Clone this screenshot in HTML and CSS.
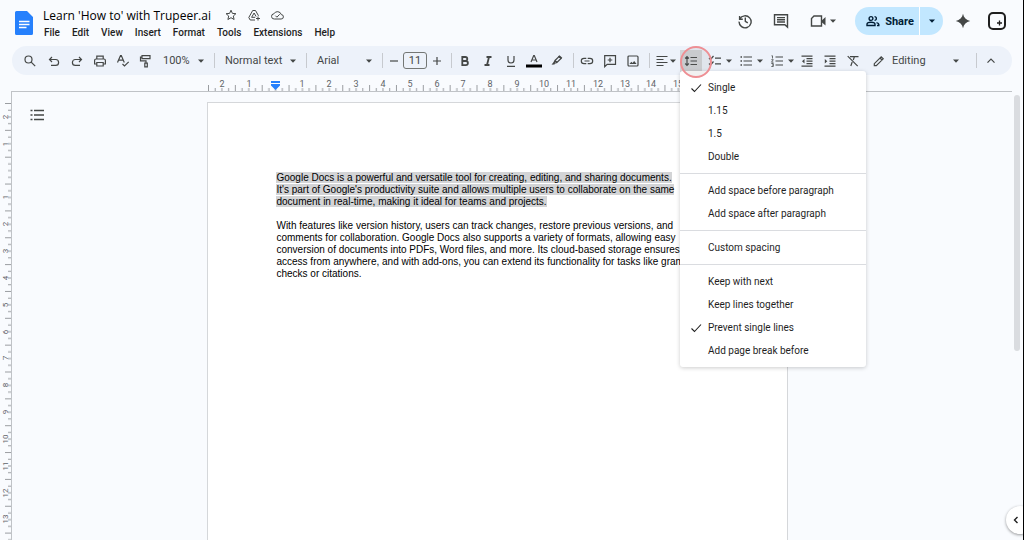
FILE: index.html
```html
<!DOCTYPE html>
<html lang="en">
<head>
  <meta charset="UTF-8">
  <title>Learn 'How to' with Trupeer.ai</title>
  <link rel="stylesheet" href="styles.css">
</head>
<body>

<svg class="sprite" aria-hidden="true">
  <symbol id="caret" viewBox="0 0 8 8"><path d="M1 2.500h6L4 5.700z" fill="currentColor"/></symbol>
  <symbol id="check" viewBox="0 0 12 12"><path d="M1.500 6.500l3 3L11 2.500" fill="none" stroke="currentColor" stroke-width="1.100"/></symbol>
</svg>

<header class="header">
  <a class="logo" href="#" aria-label="Docs home">
    <svg width="18" height="24" viewBox="0 0 18 24"><path class="sheet" d="M1.500 0H12l6 6v16.500a1.500 1.500 0 0 1-1.500 1.500h-15A1.500 1.500 0 0 1 0 22.500v-21A1.500 1.500 0 0 1 1.500 0z"/><path d="M4 10.500h10.500M4 13.500h10.500M4 16.500h7.500" stroke="#fff" stroke-width="1.400"/></svg>
  </a>
  <div class="heading">
    <div class="title-row">
      <h1>Learn 'How to' with Trupeer.ai</h1>
      <button class="title-btn" aria-label="Star"><svg width="12" height="12" viewBox="0 0 12 12"><path d="M6 1.200l1.400 3.200 3.500.3-2.600 2.300.8 3.500L6 8.700l-3.100 1.800.8-3.500L1.100 4.700l3.500-.3z"/></svg></button>
      <button class="title-btn" aria-label="Move"><svg width="13" height="12" viewBox="0 0 13 12"><path d="M7 11H2.200L.8 8.500 4.700 1.500h2.800l3 5.300M3.600 8.300L6.100 4l2 3.500M3.600 8.300h3.600M10 7.500v4M8 9.500h4"/></svg></button>
      <button class="title-btn" aria-label="See document status"><svg width="13" height="12" viewBox="0 0 13 12"><path d="M3.400 10h6.700a2.200 2.200 0 0 0 .2-4.400A4 4 0 0 0 2.900 4.800 2.600 2.600 0 0 0 3.400 10zM4.400 6.700l1.500 1.500 2.800-2.900"/></svg></button>
    </div>
    <nav class="menubar">
      <button>File</button>
      <button>Edit</button>
      <button>View</button>
      <button>Insert</button>
      <button>Format</button>
      <button>Tools</button>
      <button>Extensions</button>
      <button>Help</button>
    </nav>
  </div>
  <div class="actions">
    <button aria-label="Version history"><svg width="16" height="16" viewBox="0 0 16 16"><path d="M2.600 3v3.200h3.200M2.800 6A6 6 0 1 1 2.100 8.600M8.300 4.600v3.700l2.500 1.600"/></svg></button>
    <button aria-label="Comments"><svg width="16" height="16" viewBox="0 0 16 16"><path d="M1.500 1.700h13v12.500l-2.600-2.500H1.500zM4 4.600h8M4 6.800h8M4 9h8"/></svg></button>
    <button class="video" aria-label="Video call"><svg width="16" height="16" viewBox="0 0 16 16"><path d="M4 3h7.500v10H1.500V5.500z"/><path class="solid" d="M12 7.300L15.500 4v8.500L12 9.500z"/></svg><svg class="caret"><use href="#caret"/></svg></button>
    <div class="share">
      <button class="share-main"><svg width="14" height="12" viewBox="0 0 14 12"><circle cx="5" cy="3.500" r="1.900"/><path d="M1 10.500V9.300C1 7.800 3 7.300 5 7.300s4 .5 4 2v1.200zM8.500 1.600a1.900 1.900 0 0 1 0 3.800M10.500 7.600c1.300.3 2.300.8 2.300 1.700v1.200H11"/></svg>Share</button>
      <button class="share-more" aria-label="Share options"><svg class="caret"><use href="#caret"/></svg></button>
    </div>
    <button aria-label="Gemini"><svg width="16" height="16" viewBox="0 0 16 16"><path class="solid" d="M8 .8C8.800 4.800 11.200 7.200 15.200 8 11.200 8.800 8.800 11.200 8 15.200 7.200 11.200 4.800 8.800.8 8 4.800 7.200 7.200 4.800 8 .8z"/></svg></button>
    <button aria-label="Account"><svg width="18" height="18" viewBox="0 0 18 18"><rect x="1" y="1" width="16" height="16" rx="4"/><path d="M11.500 8.500v5M9 11h5" stroke-width="1.300"/></svg></button>
  </div>
</header>

<div class="toolbar" role="toolbar">
  <button class="tool search" aria-label="Search the menus"><svg viewBox="0 0 14 14"><circle cx="5.500" cy="5.500" r="3.500"/><path d="M8.200 8.200l4 4"/></svg></button>
  <button class="tool" aria-label="Undo"><svg viewBox="0 0 14 14"><path d="M5 3L2.500 5.500 5 8M2.700 5.500h6a2.900 2.900 0 0 1 0 5.800H4"/></svg></button>
  <button class="tool" aria-label="Redo"><svg viewBox="0 0 14 14"><path d="M9 3l2.500 2.500L9 8M11.300 5.500h-6a2.900 2.900 0 0 0 0 5.800H10"/></svg></button>
  <button class="tool" aria-label="Print"><svg viewBox="0 0 14 14"><path d="M3.800 5V2.200h6.400V5M3.800 10H1.600V6.500A1.500 1.500 0 0 1 3.100 5h7.800a1.500 1.500 0 0 1 1.500 1.500V10h-2.200M3.800 8.500h6.400V12H3.800z"/></svg></button>
  <button class="tool" aria-label="Spelling"><svg viewBox="0 0 14 14"><path d="M1.500 8.500l3-7h.8l3 7M2.600 6.200h4.600M6.500 10l2 2 4.200-4.200"/></svg></button>
  <button class="tool" aria-label="Paint format"><svg viewBox="0 0 14 14"><path d="M3 1.700h8v3H3zM3 3.200H1.500v3.600H7v2.400M5.800 9.200h2.500v3.600H5.800z"/></svg></button>
  <button class="pick zoom">100%<svg class="caret"><use href="#caret"/></svg></button>
  <span class="sep"></span>
  <button class="pick style">Normal text<svg class="caret"><use href="#caret"/></svg></button>
  <span class="sep"></span>
  <button class="pick family">Arial<svg class="caret"><use href="#caret"/></svg></button>
  <span class="sep"></span>
  <button class="tool step" aria-label="Decrease font size"><svg viewBox="0 0 14 14"><path d="M3 7h8"/></svg></button>
  <input class="size" type="text" value="11" aria-label="Font size">
  <button class="tool step" aria-label="Increase font size"><svg viewBox="0 0 14 14"><path d="M3 7h8M7 3v8"/></svg></button>
  <span class="sep"></span>
  <button class="tool" aria-label="Bold"><svg viewBox="0 0 14 14"><path class="heavy" d="M4.300 3h3a2 2 0 0 1 0 4h-3zM4.300 7h3.500a2.100 2.100 0 0 1 0 4.200H4.300z"/></svg></button>
  <button class="tool" aria-label="Italic"><svg viewBox="0 0 14 14"><path class="heavy" d="M5.500 3h5M3.500 11h5M8 3l-2 8"/></svg></button>
  <button class="tool" aria-label="Underline"><svg viewBox="0 0 14 14"><path d="M4 2v4a3 3 0 0 0 6 0V2M3 12.400h8"/></svg></button>
  <button class="tool color" aria-label="Text color"><svg viewBox="0 0 16 14"><path d="M5 8l2.700-6.500h.6L11 8M6 6h4"/><path class="black" d="M0 10.500h16v3H0z"/></svg></button>
  <button class="tool" aria-label="Highlight color"><svg viewBox="0 0 14 14"><path d="M5 6.500l4-4 2 2-4 4zM5 6.500L3.500 9.500 7 8.500"/><path class="solid" d="M8 2.500l1.500-1.300 2.800 2.500-1.300 1.500zM1.500 10.500l2-2 1.500 1.500-.7.500z"/></svg></button>
  <span class="sep"></span>
  <button class="tool" aria-label="Insert link"><svg viewBox="0 0 14 14"><path d="M6.300 4.300H4a2.700 2.700 0 0 0 0 5.400h2.300M7.700 4.300H10a2.700 2.700 0 0 1 0 5.400H7.700M4.500 7h5"/></svg></button>
  <button class="tool" aria-label="Add comment"><svg viewBox="0 0 14 14"><path d="M1.700 1.700h10.800v8.600H4.200L1.700 12.700zM7 3.700v4.600M4.700 6h4.600"/></svg></button>
  <button class="tool" aria-label="Insert image"><svg viewBox="0 0 14 14"><rect x="2" y="2" width="10" height="10" rx="1"/><path class="solid" d="M3.500 10l1.800-2.300 1.200 1.400L8.200 7l2.400 3z"/></svg></button>
  <span class="sep"></span>
  <button class="tool align" aria-label="Align"><svg viewBox="0 0 14 14"><path d="M1.500 2.500h11M1.500 5.500h7M1.500 8.500h11M1.500 11.500h7"/></svg><svg class="caret"><use href="#caret"/></svg></button>
  <div class="spacing">
    <button class="tool active" aria-label="Line &amp; paragraph spacing" aria-expanded="true"><svg viewBox="0 0 14 14"><path d="M3 3v8M1.200 4.500L3 2.700l1.800 1.800M1.200 9.500L3 11.300l1.800-1.800M6.500 3.500h6.500M6.500 7h6.500M6.500 10.500h6.500"/></svg></button>
    <span class="click-ring"></span>
    <div class="menu" role="menu">
      <button role="menuitem"><svg class="check"><use href="#check"/></svg>Single</button>
      <button role="menuitem">1.15</button>
      <button role="menuitem">1.5</button>
      <button role="menuitem">Double</button>
      <hr>
      <button role="menuitem">Add space before paragraph</button>
      <button role="menuitem">Add space after paragraph</button>
      <hr>
      <button role="menuitem">Custom spacing</button>
      <hr>
      <button role="menuitem">Keep with next</button>
      <button role="menuitem">Keep lines together</button>
      <button role="menuitem"><svg class="check"><use href="#check"/></svg>Prevent single lines</button>
      <button role="menuitem">Add page break before</button>
    </div>
  </div>
  <button class="tool list" aria-label="Checklist"><svg viewBox="0 0 14 14"><path d="M1 4l1.500 1.500L5.500 2M1 9.500L2.500 11l3-3.500M7 4.200h6M7 9.800h6"/></svg><svg class="caret"><use href="#caret"/></svg></button>
  <button class="tool list" aria-label="Bulleted list"><svg viewBox="0 0 14 14"><path d="M4.500 3h8.500M4.500 7h8.500M4.500 11h8.500"/><path class="dots" d="M1.500 3h1.500M1.500 7h1.500M1.500 11h1.500"/></svg><svg class="caret"><use href="#caret"/></svg></button>
  <button class="tool list" aria-label="Numbered list"><svg viewBox="0 0 14 14"><path d="M5.500 3h7.500M5.500 7h7.500M5.500 11h7.500"/><path class="thin" d="M1.500 1.800h1v2.700M1.300 5.700h2L1.500 8.200h2M1.300 9.500h2v3h-2M2 11h1.300"/></svg><svg class="caret"><use href="#caret"/></svg></button>
  <button class="tool" aria-label="Decrease indent"><svg viewBox="0 0 14 14"><path d="M1.500 2.200h11M6.500 4.700h6M6.500 7.200h6M6.500 9.700h6M1.500 12.200h11"/><path class="solid" d="M4.500 5v4.400L2 7.200z"/></svg></button>
  <button class="tool" aria-label="Increase indent"><svg viewBox="0 0 14 14"><path d="M1.500 2.200h11M6.500 4.700h6M6.500 7.200h6M6.500 9.700h6M1.500 12.200h11"/><path class="solid" d="M1.800 5v4.400l2.500-2.200z"/></svg></button>
  <button class="tool" aria-label="Clear formatting"><svg viewBox="0 0 14 14"><path d="M4 2.700h8.500M8.300 3l-1 3M6.200 8l-1.400 4M1.700 2.200l10 10"/></svg></button>
  <button class="pick mode"><svg viewBox="0 0 14 14"><path d="M2.300 11.700v-2l6.900-6.900 2 2-6.900 6.900zM8 4l2 2"/></svg>Editing<svg class="caret"><use href="#caret"/></svg></button>
  <span class="sep"></span>
  <button class="tool collapse" aria-label="Hide the menus"><svg viewBox="0 0 14 14"><path d="M3.500 8.700L7 5.200l3.500 3.500"/></svg></button>
</div>

<div class="ruler">
  <svg width="480" height="16">
    <defs>
      <pattern id="ticks-h" x="0" y="0" width="26.850" height="16" patternUnits="userSpaceOnUse">
        <path d="M.5 10v6M7.200 13v3M13.900 13v3M20.600 13v3" stroke="#9a9da1"/>
      </pattern>
    </defs>
    <rect width="480" height="16" fill="url(#ticks-h)"/>
    <g class="numbers">
      <text x="14" y="12">2</text><text x="41" y="12">1</text>
      <text x="94" y="12">1</text><text x="121" y="12">2</text><text x="148" y="12">3</text>
      <text x="175" y="12">4</text><text x="202" y="12">5</text><text x="229" y="12">6</text>
      <text x="255" y="12">7</text><text x="282" y="12">8</text><text x="309" y="12">9</text>
      <text x="336" y="12">10</text><text x="363" y="12">11</text><text x="390" y="12">12</text>
      <text x="417" y="12">13</text><text x="443" y="12">14</text><text x="470" y="12">15</text>
    </g>
    <path d="M63 6h9v2h-9zM63 9h9v1.500L67.500 15 63 10.500z" fill="#2680fc"/>
  </svg>
</div>

<main class="workspace">
  <aside class="side-ruler">
    <svg width="12" height="448">
      <defs>
        <pattern id="ticks-v" x="0" y="11" width="12" height="26.850" patternUnits="userSpaceOnUse">
          <path d="M5 .5h6M8 7.200h3M8 13.900h3M8 20.600h3" stroke="#9a9da1"/>
        </pattern>
      </defs>
      <rect y="11" width="12" height="437" fill="url(#ticks-v)"/>
      <g class="numbers">
        <text transform="translate(8 25) rotate(-90)">2</text><text transform="translate(8 52) rotate(-90)">1</text>
        <text transform="translate(8 105) rotate(-90)">1</text><text transform="translate(8 132) rotate(-90)">2</text>
        <text transform="translate(8 159) rotate(-90)">3</text><text transform="translate(8 186) rotate(-90)">4</text>
        <text transform="translate(8 213) rotate(-90)">5</text><text transform="translate(8 240) rotate(-90)">6</text>
        <text transform="translate(8 266) rotate(-90)">7</text><text transform="translate(8 293) rotate(-90)">8</text>
        <text transform="translate(8 320) rotate(-90)">9</text><text transform="translate(8 347) rotate(-90)">10</text>
        <text transform="translate(8 374) rotate(-90)">11</text><text transform="translate(8 401) rotate(-90)">12</text>
        <text transform="translate(8 427) rotate(-90)">13</text>
      </g>
    </svg>
  </aside>
  <div class="outline">
    <button aria-label="Show document outline"><svg width="14" height="12" viewBox="0 0 14 12"><path d="M4 1.500h10M4 6h10M4 10.500h10M.5 1.500h2M.5 6h2M.5 10.500h2"/></svg></button>
  </div>
  <article class="page">
    <p><mark>Google Docs is a powerful and versatile tool for creating, editing, and sharing documents.<br>It's part of Google's productivity suite and allows multiple users to collaborate on the same<br>document in real-time, making it ideal for teams and projects.</mark></p>
    <p>With features like version history, users can track changes, restore previous versions, and<br>comments for collaboration. Google Docs also supports a variety of formats, allowing easy<br>conversion of documents into PDFs, Word files, and more. Its cloud-based storage ensures<br>access from anywhere, and with add-ons, you can extend its functionality for tasks like grammar<br>checks or citations.</p>
  </article>
  <div class="scrollbar"><div class="thumb"></div></div>
  <button class="show-panel" aria-label="Show side panel"><svg width="8" height="8" viewBox="0 0 8 8"><path d="M5.500 1L2.500 4l3 3"/></svg></button>
</main>

</body>
</html>
```
FILE: styles.css
```css
* { box-sizing: border-box; }
body { margin: 0; height: 100vh; display: flex; flex-direction: column; overflow: hidden; background: #f9fbfe; border-right: 1px solid #000; color: #1f1f1f; font-family: Roboto, "Liberation Sans", sans-serif; font-size: 11px; }
button { margin: 0; padding: 0; border: none; background: none; color: inherit; font: inherit; display: flex; align-items: center; justify-content: center; cursor: pointer; }
svg { flex: none; fill: none; stroke: currentColor; }
.sprite { display: none; }
.caret { width: 8px; height: 8px; stroke: none; }
.solid { fill: currentColor; stroke: none; }
.sheet { fill: #2680fc; stroke: none; }

/* header */
.header { display: flex; height: 46px; padding: 0 17px 0 15px; }
.logo { height: 24px; margin-top: 11px; }
.heading { padding: 6px 0 0 8px; }
.title-row { display: flex; align-items: center; height: 18px; padding-left: 2px; }
h1 { margin: 0 14px 0 0; font-family: "Open Sans", sans-serif; font-size: 12px; font-weight: 400; color: #000; white-space: nowrap; }
.title-btn { width: 13px; margin-right: 10px; color: #444746; }
.menubar { display: flex; height: 17px; font-size: 10px; font-weight: 500; }
.menubar button { padding: 0 9px 0 3px; }
.actions { display: flex; align-items: center; height: 28px; margin: 7px 0 0 auto; color: #444746; stroke-width: 1.4; }
.actions > button { width: 18px; margin-right: 18px; }
.actions > .video { width: 30px; margin-right: 17px; gap: 3px; }
.actions > button:last-child { margin: 0 0 0 -2px; color: #1f1f1f; stroke-width: 2; }
.share { display: flex; height: 28px; margin-right: 11px; border-radius: 14px; overflow: hidden; background: #c2e7ff; color: #001d35; }
.share-main { width: 65px; padding-left: 6px; gap: 5px; border-right: 1px solid #fff; font-weight: 700; }
.share-more { width: 23px; }

/* toolbar */
.toolbar { display: flex; flex: none; height: 29px; margin: 0 11px 0 12px; padding: 0 8px 0 6px; border-radius: 15px; background: #edf2fa; color: #444746; stroke-width: 1.2; }
.tool { width: 23px; }
.tool svg, .mode svg { width: 14px; height: 14px; }
.color svg { width: 16px; }
.tool .caret, .mode .caret { width: 8px; height: 8px; }
.tool.search { width: 24px; }
.tool.step { width: 19px; }
.tool.align { width: 29px; }
.tool.list { width: 31px; padding-left: 6px; gap: 3px; }
.tool.collapse { width: 26px; }
.tool.active { width: 22px; height: 22px; margin-top: 4px; background: #d3d5d9; }
.heavy { stroke-width: 1.8; }
.thin { stroke-width: 0.8; }
.dots { stroke-width: 1.6; }
.black { fill: #000; stroke: none; }
.pick { justify-content: flex-start; padding: 0 4px 0 9px; }
.pick .caret { margin-left: auto; }
.zoom { width: 52px; padding-left: 6px; }
.style { width: 85px; }
.family { width: 69px; }
.mode { width: 99px; gap: 6px; margin-left: auto; padding-left: 0; padding-right: 11px; }
.sep { width: 1px; height: 15px; margin: 7px 1px 0 5px; background: #c7cacf; }
.size { align-self: center; width: 24px; height: 17px; padding: 0; border: 1px solid #747775; border-radius: 3px; background: none; color: inherit; font: inherit; text-align: center; }

/* line spacing menu */
.spacing { position: relative; }
.menu { position: absolute; z-index: 2; top: 25px; left: 0; width: 186px; padding: 5px 0; border-radius: 3px; background: #fff; color: #1f1f1f; font-size: 10px; box-shadow: 0 1px 4px rgba(0, 0, 0, 0.2); }
.menu button { position: relative; width: 100%; height: 23px; padding-left: 28px; justify-content: flex-start; }
.menu hr { height: 1px; margin: 5px 0; border: none; background: #dadce0; }
.check { position: absolute; left: 10px; width: 12px; height: 12px; }
.click-ring { position: absolute; z-index: 3; top: 0; left: 0; width: 32px; height: 32px; border: 2px solid #ee8f94; border-radius: 50%; background: rgba(120, 120, 120, 0.1); }

/* rulers */
.ruler { flex: none; height: 17px; margin: 0 11px 0 11px; padding-left: 197px; border-bottom: 1px solid #c0c3c7; }
.ruler svg, .side-ruler svg { display: block; stroke: none; }
.numbers { fill: #5f6368; font-size: 9px; text-anchor: middle; }
.side-ruler { width: 12px; border-right: 1px solid #c0c3c7; }
.side-ruler .numbers { font-size: 8px; }

/* document */
.workspace { position: relative; display: flex; flex: 1; min-height: 0; overflow: hidden; }
.outline { flex: 195; stroke-width: 1.4; }
.outline button { margin: 17px 0 0 18px; color: #444746; }
.page { width: 581px; margin-top: 10px; padding: 69px 68px; border: 1px solid #d5d7da; border-bottom: none; background: #fff; color: #000; font-family: "Liberation Sans", Arial, sans-serif; font-size: 10px; line-height: 12px; white-space: nowrap; }
.page p { margin: 0 0 12px; }
mark { background: #d3d4d6; color: inherit; }
.scrollbar { flex: 234; }
.thumb { width: 6px; height: 256px; margin: 3px 3px 0 auto; border-radius: 3px; background: #dadce0; }
.show-panel { position: absolute; right: -11px; bottom: 6px; width: 28px; height: 28px; padding-right: 8px; border-radius: 50%; background: #fff; box-shadow: 0 1px 3px rgba(0, 0, 0, 0.4); stroke-width: 1.4; }
```
